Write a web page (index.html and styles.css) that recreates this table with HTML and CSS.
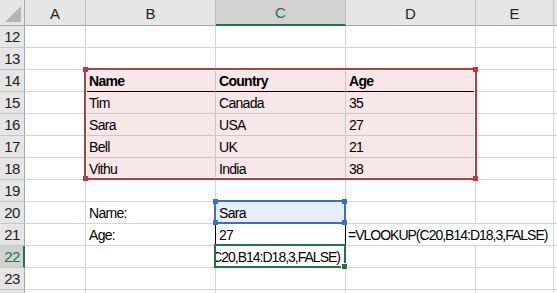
FILE: index.html
```html
<!DOCTYPE html>
<html lang="en">
<head>
    <meta charset="UTF-8">
    <title>VLOOKUP example</title>
    <link rel="stylesheet" href="styles.css">
</head>
<body>
    <div class="sheet">
        <!-- Column headers -->
        <div class="corner">
            <svg width="16" height="16" viewBox="0 0 16 16"><polygon points="16,0 16,16 0,16" fill="#b5b5b5"/></svg>
        </div>
        <div class="ch">A</div>
        <div class="ch">B</div>
        <div class="ch ch-sel">C</div>
        <div class="ch">D</div>
        <div class="ch">E</div>
        <div class="ch ch-end"></div>

        <!-- 12 -->
        <div class="rh">12</div>
        <div class="cell"></div><div class="cell"></div><div class="cell"></div><div class="cell"></div><div class="cell"></div><div class="cell"></div>
        <!-- 13 -->
        <div class="rh">13</div>
        <div class="cell"></div><div class="cell"></div><div class="cell"></div><div class="cell"></div><div class="cell"></div><div class="cell"></div>
        <!-- 14 -->
        <div class="rh">14</div>
        <div class="cell"></div>
        <div class="cell tbl th">Name</div>
        <div class="cell tbl th">Country</div>
        <div class="cell tbl th">Age</div>
        <div class="cell"></div><div class="cell"></div>
        <!-- 15 -->
        <div class="rh">15</div>
        <div class="cell"></div>
        <div class="cell tbl">Tim</div>
        <div class="cell tbl">Canada</div>
        <div class="cell tbl">35</div>
        <div class="cell"></div><div class="cell"></div>
        <!-- 16 -->
        <div class="rh">16</div>
        <div class="cell"></div>
        <div class="cell tbl">Sara</div>
        <div class="cell tbl">USA</div>
        <div class="cell tbl">27</div>
        <div class="cell"></div><div class="cell"></div>
        <!-- 17 -->
        <div class="rh">17</div>
        <div class="cell"></div>
        <div class="cell tbl">Bell</div>
        <div class="cell tbl">UK</div>
        <div class="cell tbl">21</div>
        <div class="cell"></div><div class="cell"></div>
        <!-- 18 -->
        <div class="rh">18</div>
        <div class="cell"></div>
        <div class="cell tbl">Vithu</div>
        <div class="cell tbl">India</div>
        <div class="cell tbl">38</div>
        <div class="cell"></div><div class="cell"></div>
        <!-- 19 -->
        <div class="rh">19</div>
        <div class="cell"></div><div class="cell"></div><div class="cell"></div><div class="cell"></div><div class="cell"></div><div class="cell"></div>
        <!-- 20 -->
        <div class="rh">20</div>
        <div class="cell"></div>
        <div class="cell">Name:</div>
        <div class="cell lookup">Sara</div>
        <div class="cell"></div><div class="cell"></div><div class="cell"></div>
        <!-- 21 -->
        <div class="rh">21</div>
        <div class="cell"></div>
        <div class="cell dark-edge">Age:</div>
        <div class="cell dark-edge">27</div>
        <div class="cell formula spill">=VLOOKUP(C20,B14:D18,3,FALSE)</div>
        <div class="cell"></div><div class="cell"></div>
        <!-- 22 -->
        <div class="rh rh-sel">22</div>
        <div class="cell"></div>
        <div class="cell"></div>
        <div class="cell formula clipped"><span>=VLOOKUP(C20,B14:D18,3,FALSE)</span></div>
        <div class="cell"></div><div class="cell"></div><div class="cell"></div>
        <!-- 23 -->
        <div class="rh">23</div>
        <div class="cell"></div><div class="cell"></div><div class="cell"></div><div class="cell"></div><div class="cell"></div><div class="cell"></div>
        <!-- 24 -->
        <div class="rh"></div>
        <div class="cell"></div><div class="cell"></div><div class="cell"></div><div class="cell"></div><div class="cell"></div><div class="cell"></div>

        <!-- Range highlights drawn over the grid -->
        <div class="range range-red">
            <span class="handle h-tl"></span><span class="handle h-tr"></span>
            <span class="handle h-bl"></span><span class="handle h-br"></span>
        </div>
        <div class="range range-blue">
            <span class="handle h-tl"></span><span class="handle h-tr"></span>
            <span class="handle h-bl"></span><span class="handle h-br"></span>
        </div>
        <div class="range range-green">
            <span class="handle h-br"></span>
        </div>
    </div>
</body>
</html>
```

FILE: styles.css
```css
/* General */
body {
    margin: 0;
    background: #fff;
    overflow: hidden;
    font-family: "Liberation Sans", Arial, sans-serif;
    color: #000;
}

/* Grid */
.sheet {
    position: relative;
    width: 557px;
    height: 293px;
    overflow: hidden;
    display: grid;
    grid-template-columns: 25px 61px 130px 130px 130px 78px minmax(0, 1fr);
    grid-template-rows: 26px;
    grid-auto-rows: 22px;
}

.cell {
    box-sizing: border-box;
    border-right: 1px solid #d4d4d4;
    border-bottom: 1px solid #d4d4d4;
    display: flex;
    align-items: flex-end;
    padding: 0 0 2px 3px;
    font-size: 14px;
    letter-spacing: -0.7px;
    white-space: nowrap;
}

/* Headers */
.corner {
    box-sizing: border-box;
    background: #e6e6e6;
    border-right: 1px solid #a8a8a8;
    border-bottom: 1px solid #a8a8a8;
    display: flex;
    align-items: flex-end;
    justify-content: flex-end;
    padding: 0 3px 3px 0;
}
.ch {
    box-sizing: border-box;
    background: #e6e6e6;
    border-right: 1px solid #c0c0c0;
    border-bottom: 1px solid #a8a8a8;
    display: flex;
    align-items: center;
    justify-content: center;
    padding-top: 1px;
    font-size: 15px;
    color: #222;
}
.ch-sel {
    background: #d2d2d2;
    border-bottom: 2px solid #217346;
    color: #217346;
}
.ch-end {
    border-right: none;
}
.rh {
    box-sizing: border-box;
    background: #e6e6e6;
    border-right: 1px solid #a8a8a8;
    border-bottom: 1px solid #c6c6c6;
    display: flex;
    align-items: center;
    justify-content: center;
    font-size: 15px;
    letter-spacing: -0.5px;
    color: #222;
}
.rh-sel {
    background: #d2d2d2;
    border-right: 2px solid #217346;
    color: #217346;
    padding-left: 1px;
}

/* Table range */
.tbl {
    background: #f8e7e8;
    border-color: #d3c5c6;
}
.th {
    font-weight: bold;
    border-bottom-color: #000;
}

/* Lookup cells */
.lookup {
    background: #e8eef8;
}
.dark-edge {
    border-right-color: #000;
}
.formula {
    letter-spacing: -1px;
}
.spill {
    border-right: none;
    overflow: visible;
    padding-left: 2px;
}
.clipped {
    justify-content: flex-end;
    overflow: hidden;
    padding-right: 5px;
}

/* Range overlays */
.range {
    position: absolute;
    box-sizing: border-box;
    border: 2px solid;
}
.range-red {
    left: 84px;
    top: 68px;
    width: 393px;
    height: 112px;
    border-color: #c3373f;
    box-shadow: inset 0 0 0 1px #fff;
}
.range-blue {
    left: 214px;
    top: 200px;
    width: 132px;
    height: 24px;
    border-color: #3b6fc6;
}
.range-green {
    left: 214px;
    top: 244px;
    width: 132px;
    height: 24px;
    border-color: #217346;
}

.handle {
    position: absolute;
    width: 5px;
    height: 5px;
}
.range-red .handle { background: #c3373f; }
.range-blue .handle { background: #3b6fc6; }
.range-green .handle { background: #217346; box-shadow: 0 0 0 1px #fff; }

.h-tl { left: -3px; top: -3px; }
.h-tr { right: -3px; top: -3px; }
.h-bl { left: -3px; bottom: -3px; }
.h-br { right: -3px; bottom: -3px; }
```
